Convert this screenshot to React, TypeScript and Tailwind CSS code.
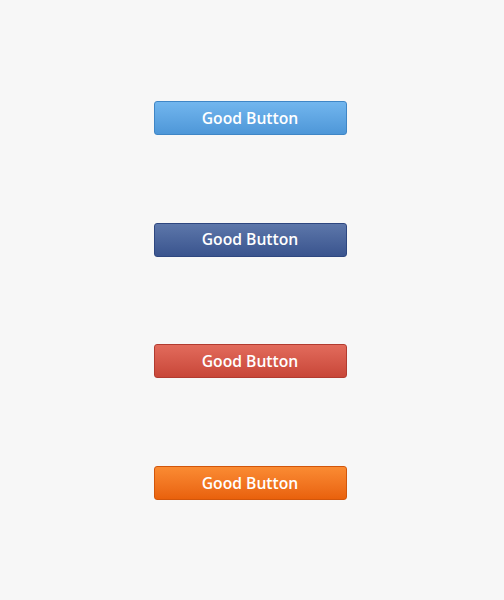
const buttons = [
  "border-[#3f86c6] bg-gradient-to-b from-[#72b6ee] to-[#4e97d8]",
  "border-[#2e4780] bg-gradient-to-b from-[#5d77aa] to-[#3a548e]",
  "border-[#b23b30] bg-gradient-to-b from-[#e26b5c] to-[#c84638]",
  "border-[#d2560b] bg-gradient-to-b from-[#fa8b32] to-[#e9610b]",
];

export default function App() {
  return (
    <div className="min-h-[600px] w-full bg-[#f7f7f7] flex flex-col items-center pt-[101px] pr-[4px] gap-[87.67px]">
      {buttons.map((cls, i) => (
        <button
          key={i}
          className={`w-[193px] h-[34px] pt-px rounded-[3px] border text-white text-[15.7px] font-semibold ${cls}`}
          style={{ fontFamily: '"Open Sans", sans-serif' }}
        >
          Good Button
        </button>
      ))}
    </div>
  );
}
